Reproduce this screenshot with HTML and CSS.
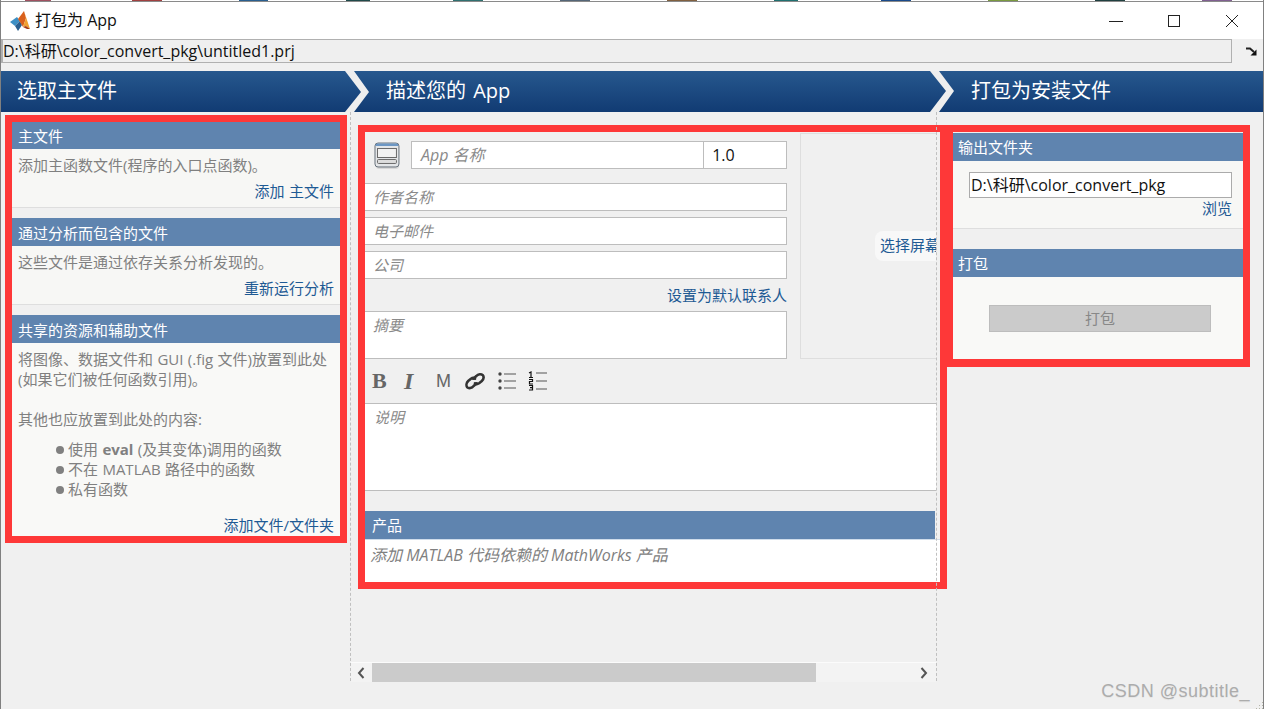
FILE: index.html
```html
<!DOCTYPE html>
<html lang="zh-CN">
<head>
<meta charset="utf-8">
<title>打包为 App</title>
<link rel="stylesheet" href="styles.css">
</head>
<body>
<div class="window">
  <div class="desktop-edge"></div>
  <header class="titlebar">
    <svg class="logo" viewBox="0 0 20 20" width="20" height="20">
      <polygon points="0,11 7,6 10,10 5,15" fill="#3d8fc4"/>
      <polygon points="5,15 10,10 12,14 8,20" fill="#2a5f8f"/>
      <polygon points="8,8 14,0 16,7 13,16 10,11" fill="#d9601c"/>
      <polygon points="14,0 20,18 16,15 13,16 16,7" fill="#f0a030"/>
      <polygon points="13,16 16,15 20,18 17,18" fill="#a33a12"/>
    </svg>
    <span class="title">打包为 App</span>
    <div class="winbtns">
      <svg width="16" height="16" viewBox="0 0 16 16"><path d="M1 8.500H15" stroke="#222" fill="none"/></svg>
      <svg width="16" height="16" viewBox="0 0 16 16"><rect x="2.500" y="2.500" width="11" height="11" stroke="#222" fill="none"/></svg>
      <svg width="16" height="16" viewBox="0 0 16 16"><path d="M2 2L14 14M14 2L2 14" stroke="#222" fill="none"/></svg>
    </div>
  </header>
  <div class="pathrow">
    <div class="pathbox">D:\科研\color_convert_pkg\untitled1.prj</div>
    <svg class="patharrow" width="11" height="9" viewBox="0 0 11 9"><path d="M0 1.500H4L8 5" stroke="#222" stroke-width="2" fill="none"/><polygon points="10.500,2.500 10.500,8.500 4.500,8.500" fill="#111"/></svg>
  </div>
  <nav class="steps">
    <div class="step step-a">选取主文件
      <svg class="chev" width="24" height="41" viewBox="0 0 24 41"><polygon points="0,0 9,0 24,21 9,41 0,41 16,21" fill="#eee"/></svg>
    </div>
    <div class="step step-b">描述您的 App
      <svg class="chev" width="24" height="41" viewBox="0 0 24 41"><polygon points="0,0 9,0 24,20 9,41 0,41 16,20" fill="#eee"/></svg>
    </div>
    <div class="step step-c">打包为安装文件</div>
  </nav>
  <main class="cols">
    <i class="dash dash-l"></i>
    <i class="dash dash-r"></i>
    <div class="col-left">
      <section class="frame frame-left">
        <h3 class="head head-first">主文件</h3>
        <div class="body">
          <p>添加主函数文件(程序的入口点函数)。</p>
          <a class="link link-gap">添加 主文件</a>
        </div>
        <h3 class="head head-next">通过分析而包含的文件</h3>
        <div class="body">
          <p>这些文件是通过依存关系分析发现的。</p>
          <a class="link link-gap">重新运行分析</a>
        </div>
        <h3 class="head head-next">共享的资源和辅助文件</h3>
        <div class="body body-fill">
          <p>将图像、数据文件和 GUI (.fig 文件)放置到此处<br>(如果它们被任何函数引用)。</p>
          <p class="para">其他也应放置到此处的内容:</p>
          <ul class="bullets">
            <li>使用 <b>eval</b> (及其变体)调用的函数</li>
            <li>不在 MATLAB 路径中的函数</li>
            <li>私有函数</li>
          </ul>
          <a class="link link-end">添加文件/文件夹</a>
        </div>
      </section>
    </div>
    <div class="col-mid">
      <section class="frame frame-mid">
        <div class="describe">
          <div class="form">
            <div class="namerow">
              <svg class="appicon" width="26" height="28" viewBox="0 0 26 28">
                <rect x="2" y="4" width="23" height="23" rx="3" fill="#bbb" opacity=".45"/>
                <rect x="1" y="1" width="24" height="24" rx="3" fill="#e4e6e8" stroke="#66707a"/>
                <path d="M1.500 4V3.500A2 2 0 0 1 3.500 1.500H22.500A2 2 0 0 1 24.500 3.500V4Z" fill="#6d97c4"/>
                <rect x="3.500" y="6.500" width="19" height="9" fill="#f2f2f2" stroke="#6a6a6a"/>
                <rect x="3.500" y="17.500" width="19" height="4" rx="1" fill="#ddd" stroke="#6a6a6a"/>
              </svg>
              <div class="field field-name">App 名称</div>
              <div class="field field-version">1.0</div>
            </div>
            <div class="field field-wide field-first">作者名称</div>
            <div class="field field-wide">电子邮件</div>
            <div class="field field-wide">公司</div>
            <div class="defaults"><a class="link">设置为默认联系人</a></div>
            <div class="field field-summary">摘要</div>
          </div>
          <div class="shots"><span class="shotlabel">选择屏幕截图</span></div>
        </div>
        <div class="toolbar">
          <span class="tool tool-b">B</span>
          <span class="tool tool-i">I</span>
          <span class="tool tool-m">M</span>
          <svg class="tool-svg tool-link" width="20" height="20" viewBox="0 0 22 22"><g fill="none" stroke="#333" stroke-width="2.800" stroke-linecap="round"><path d="M9 8.500L12.500 5.500C14.500 3 18 3 19.500 4.500C21 6.500 20.500 9 18.500 11L15.500 13.500C13.500 14.800 12 14.500 11 13.500"/><path d="M13 13.500L9.500 16.500C7.500 19 4 19.500 2.500 18C1 16 1.500 13 3.500 11L6.500 8.500C8.500 7.200 10 7.500 11 8.500"/></g></svg>
          <svg class="tool-svg" width="19" height="20" viewBox="0 0 19 20"><g fill="#444"><circle cx="2" cy="3" r="1.700"/><circle cx="2" cy="10" r="1.700"/><circle cx="2" cy="17" r="1.700"/></g><path d="M6 3H18M6 10H18M6 17H18" stroke="#555" fill="none"/></svg>
          <svg class="tool-svg" width="20" height="20" viewBox="0 0 20 20"><path d="M8 2H19M8 10H19M8 18H19" stroke="#555" fill="none"/><path d="M1 2L3 1V6M1 6.500H5M1 8.500H4.500V10.500H1.500V13H5M1 14.500H4.500V19H1M2 16.700H4.500" stroke="#111" stroke-width="1.200" fill="none"/></svg>
        </div>
        <div class="field field-desc">说明</div>
        <h3 class="head head-product">产品</h3>
        <div class="product-body">添加 MATLAB 代码依赖的 MathWorks 产品</div>
      </section>
      <div class="hscroll">
        <svg class="arrow" width="8" height="12" viewBox="0 0 8 12"><path d="M6.500 1L2 6L6.500 11" stroke="#555" stroke-width="2" fill="none"/></svg>
        <div class="track"><div class="thumb"></div></div>
        <svg class="arrow" width="8" height="12" viewBox="0 0 8 12"><path d="M1.500 1L6 6L1.500 11" stroke="#555" stroke-width="2" fill="none"/></svg>
      </div>
    </div>
    <div class="col-right">
      <section class="frame frame-right">
        <h3 class="head head-out">输出文件夹</h3>
        <div class="body body-out">
          <div class="outpath">D:\科研\color_convert_pkg</div>
          <a class="link link-browse">浏览</a>
        </div>
        <h3 class="head head-pack">打包</h3>
        <div class="body-pack"><button class="packbtn" disabled>打包</button></div>
      </section>
    </div>
  </main>
  <div class="watermark">CSDN @subtitle_</div>
</div>
</body>
</html>
```
FILE: styles.css
```css
* { box-sizing: border-box; }
html, body { margin: 0; padding: 0; }
body {
  width: 1264px;
  height: 709px;
  overflow: hidden;
  font-family: "Open Sans", "Noto Sans CJK SC", sans-serif;
  font-size: 15px;
  background: #f0f0f0;
}
.window {
  position: relative;
  height: 709px;
  border-left: 1px solid #808080;
  border-right: 1px solid #808080;
  background: #f0f0f0;
  display: flex;
  flex-direction: column;
}
.window::after {
  content: "";
  position: absolute;
  right: 0;
  bottom: 0;
  width: 8px;
  height: 8px;
  background-image: radial-gradient(circle, #b5b5a8 1px, transparent 1px);
  background-size: 3px 3px;
  clip-path: polygon(100% 0, 100% 100%, 0 100%);
}
.desktop-edge {
  height: 2px;
  border-bottom: 1px solid #8a8a8a;
  background: linear-gradient(90deg,
    #fff 24px, #a05060 24px, #a05060 50px, #fff 50px,
    #fff 131px, #a04040 131px, #a04040 161px, #fff 161px,
    #fff 238px, #2a5f8f 238px, #2a5f8f 267px, #fff 267px,
    #fff 345px, #204a4a 345px, #204a4a 369px, #fff 369px,
    #fff 452px, #307070 452px, #307070 482px, #fff 482px,
    #fff 559px, #556677 559px, #556677 589px, #fff 589px,
    #fff 666px, #806040 666px, #806040 696px, #fff 696px,
    #fff 773px, #207070 773px, #207070 797px, #fff 797px,
    #fff 880px, #1a4a8a 880px, #1a4a8a 910px, #fff 910px,
    #fff 987px, #7a9a40 987px, #7a9a40 1017px, #fff 1017px,
    #fff 1094px, #204040 1094px, #204040 1124px, #fff 1124px,
    #fff 1201px, #806090 1201px, #806090 1231px, #fff 1231px);
}
.titlebar {
  height: 37px;
  background: #fff;
  display: flex;
  align-items: center;
  padding-left: 9px;
  color: #111;
}
.logo { margin-right: 5px; }
.title { font-size: 16px; line-height: 34px; height: 36px; }
.winbtns {
  margin-left: auto;
  display: flex;
  gap: 42px;
  padding-right: 23px;
}
.pathrow {
  height: 32px;
  display: flex;
  align-items: flex-start;
}
.pathbox {
  width: 1231px;
  height: 24px;
  border: 1px solid #b0b0b0;
  border-left-width: 2px;
  line-height: 23px;
  font-size: 16px;
  color: #111;
  background: #efefef;
  white-space: nowrap;
}
.patharrow { margin: 8px 0 0 14px; }
.steps {
  height: 41px;
  display: flex;
  color: #fff;
  font-size: 20px;
  word-spacing: 2px;
  line-height: 40px;
  background: linear-gradient(#27588e, #113b73);
}
.step { position: relative; white-space: nowrap; }
.step-a { width: 344px; padding-left: 16px; }
.step-b { width: 585px; padding-left: 41px; }
.step-c { padding-left: 41px; }
.chev { position: absolute; top: 0; right: -24px; z-index: 1; }
.cols {
  position: relative;
  flex: 1;
  display: flex;
  align-items: flex-start;
}
.dash {
  position: absolute;
  top: 0;
  height: 569px;
  width: 0;
  border-left: 1px dashed #c0c0c0;
}
.dash-l { left: 349px; }
.dash-r { left: 935px; z-index: 2; }
.col-left { width: 349px; padding: 3px 0 0 4px; }
.frame { border: 7px solid #fe3838; display: flex; flex-direction: column; }
.frame-left { width: 342px; height: 428px; background: #f0f0f0; }
.head {
  margin: 0;
  height: 28px;
  line-height: 28px;
  padding-left: 6px;
  font-size: 15px;
  font-weight: 400;
  color: #fff;
  background: #5f84af;
  white-space: nowrap;
}
.head-first { height: 27px; line-height: 28px; }
.head-next { margin-top: 10px; line-height: 30px; }
.body {
  display: flex;
  flex-direction: column;
  padding: 6px 6px 6px;
  background: #f7f7f5;
  border-bottom: 1px solid #dedede;
  color: #808080;
  font-size: 15px;
  word-spacing: .5px;
  line-height: 20px;
}
.body p { margin: 0; white-space: nowrap; }
.link {
  color: #1e5a94;
  font-size: 15px;
  line-height: 20px;
  white-space: nowrap;
}
.body .link { align-self: flex-end; }
.link-gap { margin-top: 6px; }
.body-fill { flex: 1; padding-bottom: 1px; border-bottom: 0; background: #f9f9f7; }
.body .para { margin-top: 20px; }
.bullets {
  list-style: none;
  margin: 10px 0 0;
  padding: 0 0 0 38px;
}
.bullets li { position: relative; padding-left: 12px; white-space: nowrap; }
.bullets li::before {
  content: "";
  position: absolute;
  left: 0;
  top: 7px;
  width: 8px;
  height: 8px;
  border-radius: 50%;
  background: #808080;
}
.link-end { margin-top: auto; }
.col-mid { width: 597px; padding: 13px 0 0 8px; }
.frame-mid { width: 589px; height: 464px; background: #f0f0f0; }
.describe { display: flex; height: 227px; }
.form { width: 422px; }
.namerow { display: flex; align-items: flex-start; height: 28px; margin-top: 9px; padding-left: 9px; }
.appicon { margin: 1px 11px 0 0; }
.field {
  background: #fff;
  border: 1px solid #bdbdbd;
  font-size: 15px;
  font-style: italic;
  color: #8a8a8a;
  white-space: nowrap;
}
.field-name { width: 293px; height: 28px; font-size: 16px; line-height: 26px; padding-left: 9px; border-right-width: 0; }
.field-version {
  width: 84px;
  height: 28px;
  line-height: 26px;
  padding-left: 8px;
  font-size: 16px;
  font-style: normal;
  color: #111;
}
.field-wide { height: 28px; line-height: 26px; padding-left: 8px; margin-top: 6px; border-left: 0; }
.field-first { margin-top: 14px; }
.defaults { height: 32px; line-height: 32px; text-align: right; }
.defaults .link { line-height: 32px; }
.field-summary { height: 48px; line-height: 26px; padding-left: 8px; border-left: 0; }
.shots {
  position: relative;
  width: 136px;
  height: 226px;
  margin: 1px 0 0 13px;
  border: 1px solid #dedede;
  border-right: 0;
  overflow: hidden;
}
.shotlabel {
  position: absolute;
  top: 97px;
  left: 74px;
  height: 30px;
  width: 95px;
  padding-left: 5px;
  line-height: 29px;
  border-radius: 8px;
  background: #f8f8f8;
  color: #1e5a94;
  font-size: 15px;
  white-space: nowrap;
}
.toolbar {
  height: 44px;
  display: flex;
  align-items: center;
  padding-left: 7px;
  color: #666;
}
.tool { display: block; width: 32px; line-height: 22px; font-size: 22px; font-weight: 700; font-family: "Liberation Serif", serif; }
.tool-i { font-style: italic; font-size: 24px; }
.tool-m { font-family: "Liberation Sans", sans-serif; font-weight: 400; font-size: 18px; width: 29px; }
.tool-svg { margin-right: 11px; flex: none; }
.tool-link { margin-right: 13px; }
.field-desc {
  width: 571px;
  height: 88px;
  line-height: 26px;
  padding-left: 9px;
  border-width: 1px 0;
}
.head-product { width: 570px; margin-top: 20px; padding-left: 7px; }
.product-body {
  flex: 1;
  padding-left: 5px;
  line-height: 30px;
  font-size: 16px;
  font-style: italic;
  color: #808080;
  background: #fff;
  border-top: 1px solid #cfdcea;
}
.hscroll {
  display: flex;
  align-items: center;
  width: 585px;
  height: 20px;
  margin: 73px 0 0 -7px;
  border-top: 1px solid #fbfbfb;
  background: #f3f3f3;
}
.arrow { flex: none; margin: 0 6px; }
.track { flex: 1; height: 19px; }
.thumb { width: 444px; height: 19px; background: #cbcbcb; }
.hscroll .arrow:first-child { margin-right: 7px; }
.hscroll .arrow:last-child { margin: 0 8px 0 5px; }
.col-right { padding-top: 13px; }
.frame-right {
  width: 303px;
  height: 242px;
  border-left-width: 6px;
  border-bottom-width: 8px;
  background: #f0f0f0;
}
.head-out { padding-left: 5px; margin-top: 1px; }
.body-out { padding: 11px 11px 9px 16px; height: 68px; background: #f7f7f5; }
.outpath {
  height: 26px;
  line-height: 24px;
  border: 1px solid #ababab;
  background: #fff;
  padding-left: 1px;
  color: #111;
  font-size: 16px;
  white-space: nowrap;
}
.link-browse { margin-top: 0; }
.head-pack { margin-top: 20px; padding-left: 5px; }
.body-pack {
  flex: 1;
  background: #f9f9f7;
  padding: 28px 0 0 36px;
}
.packbtn {
  display: block;
  width: 222px;
  height: 27px;
  padding: 0;
  border: 1px solid #bdbdbd;
  background: #cbcbcb;
  color: #888;
  font: inherit;
  font-size: 15px;
  line-height: 25px;
}
.watermark {
  position: absolute;
  right: 13px;
  bottom: 7px;
  font-family: "Liberation Sans", sans-serif;
  font-size: 18px;
  letter-spacing: .5px;
  color: #acacac;
  text-shadow: 0 1px 0 #e6e6e6;
  white-space: nowrap;
}
```
